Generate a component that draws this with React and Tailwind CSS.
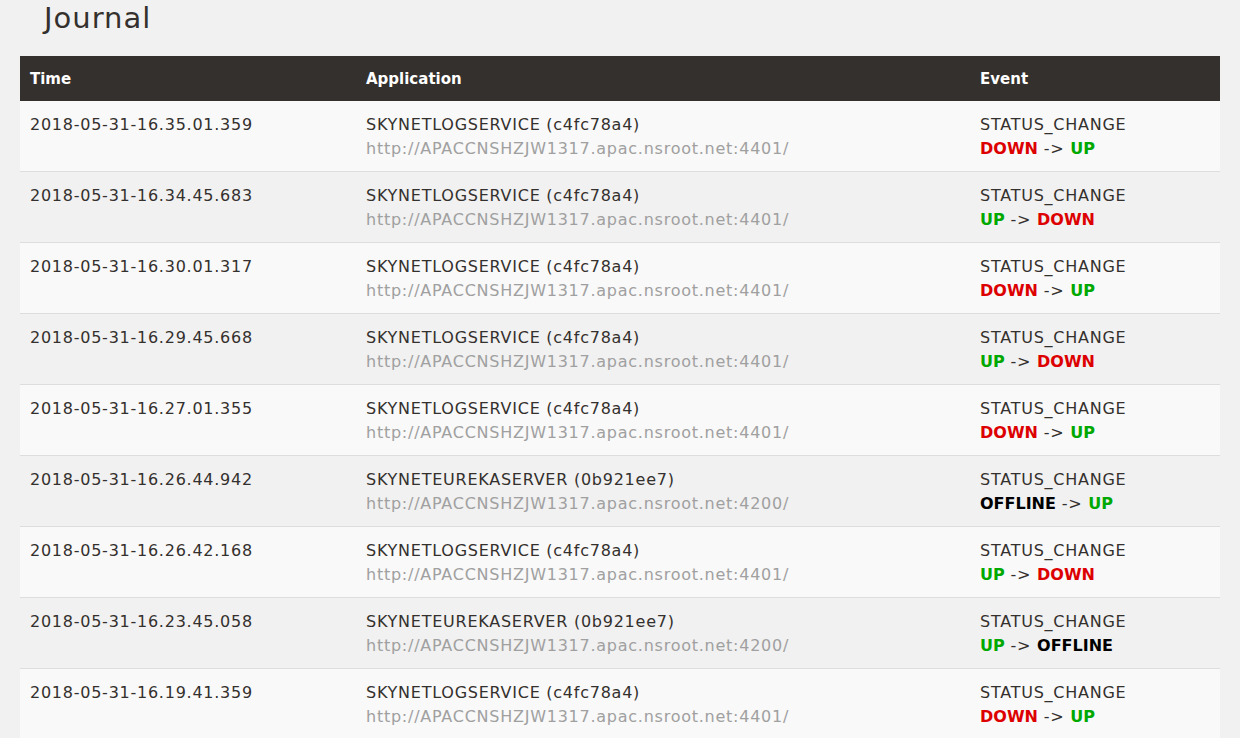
import React from "react";

const rows = [
  ["2018-05-31-16.35.01.359", "SKYNETLOGSERVICE (c4fc78a4)", "4401", "DOWN", "UP"],
  ["2018-05-31-16.34.45.683", "SKYNETLOGSERVICE (c4fc78a4)", "4401", "UP", "DOWN"],
  ["2018-05-31-16.30.01.317", "SKYNETLOGSERVICE (c4fc78a4)", "4401", "DOWN", "UP"],
  ["2018-05-31-16.29.45.668", "SKYNETLOGSERVICE (c4fc78a4)", "4401", "UP", "DOWN"],
  ["2018-05-31-16.27.01.355", "SKYNETLOGSERVICE (c4fc78a4)", "4401", "DOWN", "UP"],
  ["2018-05-31-16.26.44.942", "SKYNETEUREKASERVER (0b921ee7)", "4200", "OFFLINE", "UP"],
  ["2018-05-31-16.26.42.168", "SKYNETLOGSERVICE (c4fc78a4)", "4401", "UP", "DOWN"],
  ["2018-05-31-16.23.45.058", "SKYNETEUREKASERVER (0b921ee7)", "4200", "UP", "OFFLINE"],
  ["2018-05-31-16.19.41.359", "SKYNETLOGSERVICE (c4fc78a4)", "4401", "DOWN", "UP"],
];

function Status({ s }) {
  const cls =
    s === "UP" ? "text-[#00a800]" : s === "DOWN" ? "text-[#dd0000]" : "text-black";
  return <span className={`font-bold tracking-normal ${cls}`}>{s}</span>;
}

export default function App() {
  return (
    <div
      className="min-h-[738px] bg-[#f1f1f1] text-[#34302d] px-5"
      style={{ fontFamily: '"DejaVu Sans", "Open Sans", sans-serif' }}
    >
      <h1 className="pl-6 h-14 pt-[1px] text-[29px] leading-[34px] tracking-[1px] text-[#34302d]">
        Journal
      </h1>
      <div className="w-[1200px] text-[16px] leading-[24px] tracking-[0.75px]">
        <div className="flex bg-[#34302d] text-white font-bold text-[15px] tracking-normal h-[45px] items-center">
          <div className="w-[336px] pl-[10px]">Time</div>
          <div className="w-[614px] pl-[10px]">Application</div>
          <div className="flex-1 pl-[10px]">Event</div>
        </div>
        {rows.map((r, i) => (
          <div
            key={i}
            className={`flex h-[71px] pt-[12px] border-b border-[#dddddd] ${
              i % 2 === 0 ? "bg-[#f9f9f9]" : "bg-[#f1f1f1]"
            }`}
          >
            <div className="w-[336px] pl-[10px]">{r[0]}</div>
            <div className="w-[614px] pl-[10px]">
              <div>{r[1]}</div>
              <div className="text-[#a0a0a0]">
                http://APACCNSHZJW1317.apac.nsroot.net:{r[2]}/
              </div>
            </div>
            <div className="flex-1 pl-[10px]">
              <div>STATUS_CHANGE</div>
              <div>
                <Status s={r[3]} /> -&gt; <Status s={r[4]} />
              </div>
            </div>
          </div>
        ))}
      </div>
    </div>
  );
}
